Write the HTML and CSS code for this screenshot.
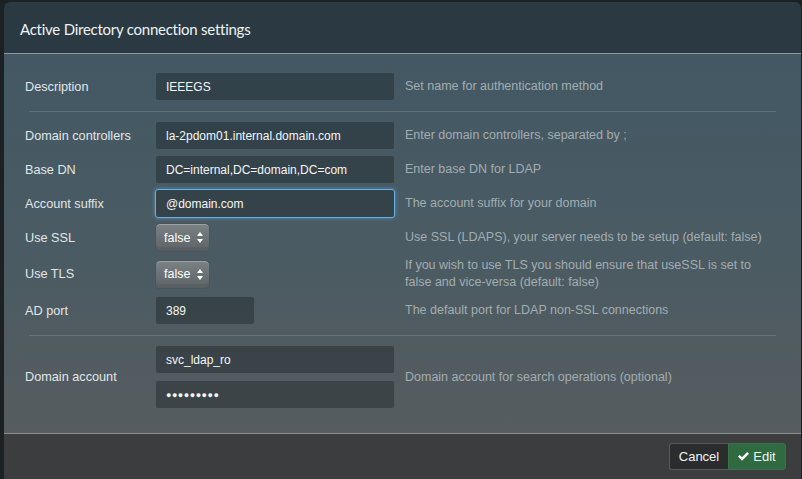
FILE: index.html
```html
<!DOCTYPE html>
<html>
<head>
<meta charset="utf-8">
<link rel="stylesheet" href="styles.css">
</head>
<body>
<div class="modal">
  <div class="modal-header">
    <h3 class="modal-title">Active Directory connection settings</h3>
  </div>
  <div class="modal-body">
    <div class="row">
      <div class="label">Description</div>
      <div class="field"><div class="input">IEEEGS</div></div>
      <div class="help">Set name for authentication method</div>
    </div>
    <hr class="sep">
    <div class="rows">
      <div class="row">
        <div class="label">Domain controllers</div>
        <div class="field"><div class="input">la-2pdom01.internal.domain.com</div></div>
        <div class="help">Enter domain controllers, separated by ;</div>
      </div>
      <div class="row">
        <div class="label">Base DN</div>
        <div class="field"><div class="input">DC=internal,DC=domain,DC=com</div></div>
        <div class="help">Enter base DN for LDAP</div>
      </div>
      <div class="row">
        <div class="label">Account suffix</div>
        <div class="field"><div class="input focus">@domain.com</div></div>
        <div class="help">The account suffix for your domain</div>
      </div>
      <div class="row">
        <div class="label">Use SSL</div>
        <div class="field"><div class="select"><span>false</span><svg class="arrows" width="6" height="11" viewBox="0 0 6 11"><path d="M3 0L6 4H0Z M3 11L0 7H6Z" fill="#fff"/></svg></div></div>
        <div class="help">Use SSL (LDAPS), your server needs to be setup (default: false)</div>
      </div>
      <div class="row">
        <div class="label">Use TLS</div>
        <div class="field"><div class="select"><span>false</span><svg class="arrows" width="6" height="11" viewBox="0 0 6 11"><path d="M3 0L6 4H0Z M3 11L0 7H6Z" fill="#fff"/></svg></div></div>
        <div class="help">If you wish to use TLS you should ensure that useSSL is set to false and vice-versa (default: false)</div>
      </div>
      <div class="row">
        <div class="label">AD port</div>
        <div class="field"><div class="input short">389</div></div>
        <div class="help">The default port for LDAP non-SSL connections</div>
      </div>
    </div>
    <hr class="sep">
    <div class="row">
      <div class="label">Domain account</div>
      <div class="field stack">
        <div class="input">svc_ldap_ro</div>
        <div class="input pw">&#9679;&#9679;&#9679;&#9679;&#9679;&#9679;&#9679;&#9679;&#9679;</div>
      </div>
      <div class="help">Domain account for search operations (optional)</div>
    </div>
  </div>
  <div class="modal-footer">
    <div class="btn-group">
      <button class="btn btn-cancel">Cancel</button>
      <button class="btn btn-edit"><svg class="check" width="11" height="9" viewBox="0 0 11 9"><path d="M0 4.6L1.7 2.9L4 5.2L9.2 0L11 1.7L4 8.7Z" fill="#fff"/></svg>Edit</button>
    </div>
  </div>
</div>
</body>
</html>
```
FILE: styles.css
```css
html, body {
  margin: 0;
  padding: 0;
  height: 100%;
}
body {
  background: #1c2124;
  font-family: "Liberation Sans", Arial, sans-serif;
  font-size: 13px;
  overflow: hidden;
  padding: 2px 1px 0 4px;
  box-sizing: border-box;
}
.modal {
  border-radius: 6px 6px 0 0;
  overflow: hidden;
  height: 100%;
  display: flex;
  flex-direction: column;
}
.modal-header {
  background: #2b3a42;
  height: 51px;
  border-bottom: 1px solid #8e979b;
  display: flex;
  align-items: center;
  padding-left: 16px;
  flex: none;
}
.modal-title {
  margin: 0;
  font-family: Lato, "Liberation Sans", sans-serif;
  font-weight: 400;
  font-size: 15px;
  letter-spacing: -0.25px;
  color: #eef2f4;
  position: relative;
  top: 1px;
}
.modal-body {
  background: linear-gradient(to bottom, #435864 0%, #4a5b63 50%, #565c5f 100%);
  padding: 18px 25px 24px 21px;
  flex: none;
}
.rows {
  display: flex;
  flex-direction: column;
  gap: 5px;
}
.row {
  display: grid;
  grid-template-columns: 120px 240px 1fr;
  column-gap: 10px;
  align-items: center;
}
.label {
  color: #e1e6e8;
  font-size: 12.7px;
}
.field.stack {
  display: flex;
  flex-direction: column;
  gap: 6px;
}
.input {
  height: 29px;
  box-sizing: border-box;
  background: rgba(20, 28, 32, 0.38);
  border: 1px solid rgba(255, 255, 255, 0.12);
  border-radius: 3px;
  color: #f4f6f7;
  font-size: 12px;
  padding: 0 10px;
  display: flex;
  align-items: center;
  width: 240px;
}
.input.short { width: 100px; }
.input.focus {
  border-color: #66b0e8;
  box-shadow: 0 0 4px rgba(102, 176, 232, 0.6);
}
.input.pw { font-size: 9px; letter-spacing: 0.5px; }
.select {
  width: 55px;
  height: 29px;
  box-sizing: border-box;
  border-radius: 5px;
  background: linear-gradient(to bottom, #7b8387 0%, #6a7276 50%, #5c6468 100%);
  border: 1px solid #4c5458;
  box-shadow: inset 0 1px 0 rgba(255,255,255,0.25), inset 0 -4px 0 rgba(0,0,0,0.05);
  color: #ffffff;
  font-size: 12.5px;
  display: flex;
  align-items: center;
  justify-content: space-between;
  padding: 0 6px 0 8px;
}
.help {
  color: #a3adb1;
  font-size: 12.5px;
  line-height: 17px;
}
.sep {
  border: 0;
  border-top: 1px solid rgba(255, 255, 255, 0.14);
  margin: 10px 0 9px 4px;
}
.modal-footer {
  background: #3b3d3f;
  border-top: 1px solid #8a8e90;
  flex: 1;
  display: flex;
  justify-content: flex-end;
  align-items: flex-start;
  padding: 9px 15px 0 0;
}
.btn-group {
  display: flex;
}
.btn {
  font-family: "Liberation Sans", Arial, sans-serif;
  font-size: 13px;
  color: #f2f4f4;
  height: 27px;
  box-sizing: border-box;
  border: 1px solid #555a5c;
  padding: 0;
  display: flex;
  align-items: center;
  gap: 4px;
  margin: 0;
}
.btn-cancel {
  background: #2a2c2e;
  border-radius: 3px 0 0 3px;
  border-right: 0;
  width: 59px;
  justify-content: center;
}
.btn-edit {
  background: #2f6a41;
  border-color: #3f6f4c;
  border-radius: 0 3px 3px 0;
  width: 58px;
  justify-content: center;
}
```
